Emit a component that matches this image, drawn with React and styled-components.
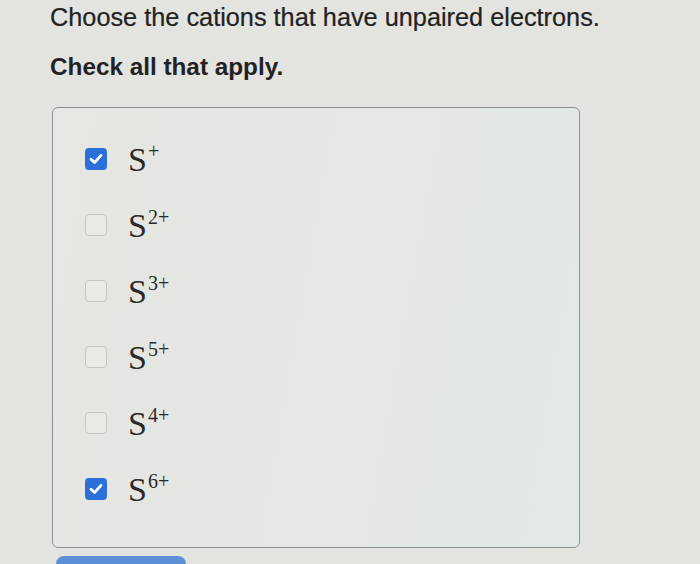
import React from "react";
import styled, { createGlobalStyle } from "styled-components";

const GlobalStyle = createGlobalStyle`
  html, body {
    margin: 0;
    padding: 0;
    background: #e3e3df;
  }
`;

const Page = styled.div`
  width: 700px;
  height: 564px;
  overflow: hidden;
  padding-left: 50px;
  box-sizing: border-box;
  font-family: "Liberation Sans", Arial, sans-serif;
  color: #222;
`;

const Question = styled.p`
  margin: 0;
  padding-top: 1px;
  font-size: 25.3px;
  line-height: 32px;
  -webkit-text-stroke: 0.2px #222;
`;

const Hint = styled.p`
  margin: 18px 0 0;
  font-size: 24.3px;
  line-height: 32px;
  font-weight: bold;
`;

const Choices = styled.div`
  margin-top: 24px;
  margin-left: 2px;
  width: 528px;
  height: 441px;
  box-sizing: border-box;
  border: 1.5px solid #8d8f90;
  border-radius: 6px;
  background: linear-gradient(100deg, #e6e6e2 0%, #e4e7e4 60%, #e2e8e5 100%);
  padding: 18px 0 0 32px;
  display: flex;
  flex-direction: column;
`;

const Row = styled.label`
  display: flex;
  align-items: center;
  gap: 21px;
  height: 66px;
`;

const Box = styled.span`
  width: 22px;
  height: 22px;
  box-sizing: border-box;
  border-radius: 4px;
  display: flex;
  align-items: center;
  justify-content: center;
  background: ${(p) => (p.checked ? "#2b6fd8" : "#e9e9e6")};
  border: ${(p) => (p.checked ? "none" : "1.5px solid #c6c6c3")};
`;

const Ion = styled.span`
  font-family: "Liberation Serif", "Times New Roman", serif;
  font-size: 34px;
  color: #2a2a2a;
  line-height: 1;
  sup {
    font-size: 20px;
    vertical-align: 13px;
    margin-left: 1px;
  }
`;

const Submit = styled.div`
  margin-top: 8px;
  margin-left: 6px;
  width: 130px;
  height: 30px;
  border-radius: 8px;
  background: #5d8fd6;
`;

const Check = () => (
  <svg width="14" height="12" viewBox="0 0 14 12">
    <path
      d="M2 6.2 L5.5 9.6 L12 2.4"
      fill="none"
      stroke="#ffffff"
      strokeWidth="2.8"
      strokeLinecap="round"
      strokeLinejoin="round"
    />
  </svg>
);

const options = [
  { charge: "+", checked: true },
  { charge: "2+", checked: false },
  { charge: "3+", checked: false },
  { charge: "5+", checked: false },
  { charge: "4+", checked: false },
  { charge: "6+", checked: true },
];

export default function App() {
  return (
    <>
      <GlobalStyle />
      <Page>
        <Question>Choose the cations that have unpaired electrons.</Question>
        <Hint>Check all that apply.</Hint>
        <Choices>
          {options.map((o) => (
            <Row key={o.charge}>
              <Box checked={o.checked}>{o.checked && <Check />}</Box>
              <Ion>
                S<sup>{o.charge}</sup>
              </Ion>
            </Row>
          ))}
        </Choices>
        <Submit />
      </Page>
    </>
  );
}
